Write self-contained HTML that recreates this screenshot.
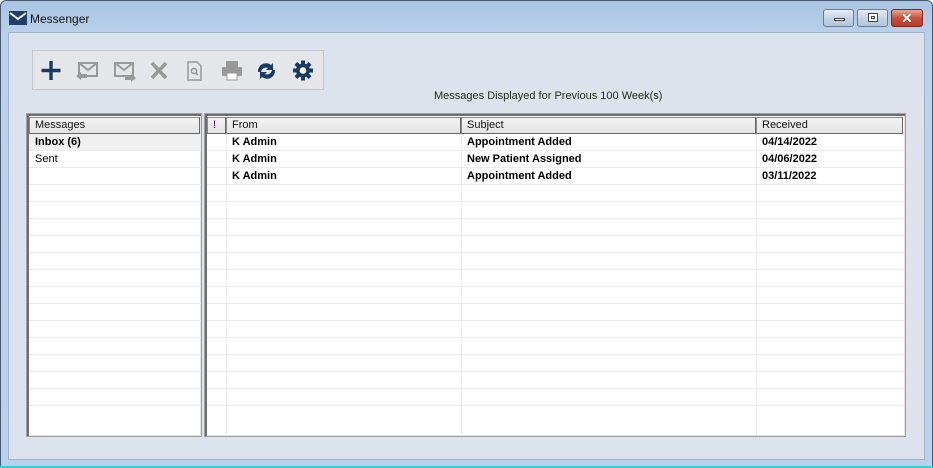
<!DOCTYPE html>
<html><head><meta charset="utf-8"><style>
*{margin:0;padding:0;box-sizing:border-box}
body{width:933px;height:468px;overflow:hidden;background:#fff;font-family:"Liberation Sans",sans-serif;font-size:11px;color:#000;position:relative}
.a{position:absolute}
.frame{left:0;top:0;width:933px;height:468px;background:linear-gradient(#a9c4e2,#bcd3ec 40px,#b9d1ea);border:1px solid #4a5a70;border-radius:6px 6px 0 0}
.client{left:8px;top:32px;width:917px;height:428px;background:#dce3ed;border:1px solid #9fb3cc}
.btn{top:9px;height:18px;border:1px solid #6b7d95;border-radius:3px;background:linear-gradient(#e6edf6,#c5d4e6 50%,#b2c5dc)}
.tb{left:32px;top:50px;width:292px;height:40px;background:#e4e6ea;border:1px solid #c4c7cc}
.panel{background:#fff;border:1px solid #a0a0a0;box-shadow:inset 2px 2px 0 #6e6e6e,inset -1px -1px 0 #e3e3e3}
.hdr{background:linear-gradient(#f4f4f4,#e4e4e4);border:1px solid #8a8a8a;border-right-color:#666;border-bottom-color:#666;height:17px;line-height:15px;padding-left:5px;font-size:11px;color:#111}
.row{height:17px;line-height:16px;border-bottom:1px solid #ececec;position:relative}
b{font-weight:bold}
</style></head><body>
<div class="a frame"></div>
<svg class="a" style="left:9px;top:11px" width="18" height="14"><rect x="0" y="0" width="18" height="14" fill="#1f3f6b"/><path d="M1 2 L9 8 L17 2" stroke="#fff" stroke-width="2" fill="none"/></svg>
<div class="a" style="left:30px;top:12px;font-size:12px;color:#111">Messenger</div>
<div class="a btn" style="left:823px;width:31px"><div class="a" style="left:10px;top:8px;width:11px;height:3px;background:#fff;border:1px solid #444"></div></div>
<div class="a btn" style="left:857px;width:31px"><div class="a" style="left:10px;top:3px;width:10px;height:9px;border:1px solid #444;background:#fff;box-shadow:inset 0 0 0 2px #fff,inset 0 0 0 3px #444"></div></div>
<div class="a btn" style="left:891px;width:32px;background:linear-gradient(#e8a89a,#c9503a 50%,#b83a25);border-color:#7a2a1a"><div class="a" style="left:9px;top:0px;color:#fff;font-weight:bold;font-size:14px;text-shadow:0 0 1px #333">✕</div></div>
<div class="a client"></div>
<div class="a tb"></div>
<svg class="a" style="left:32px;top:50px" width="292" height="40">
<path d="M19 11v19M9.5 20.5h19" stroke="#1a3a66" stroke-width="3.4"/>
<g fill="none" stroke="#999" stroke-width="2"><rect x="47" y="13" width="18" height="13"/><path d="M47 13l9 7 9-7"/></g><path d="M44 26l5-4v2h6v4h-6v2z" fill="#999"/>
<g fill="none" stroke="#999" stroke-width="2"><rect x="83" y="13" width="18" height="13"/><path d="M83 13l9 7 9-7"/></g><path d="M104 28l-5-4v2h-6v4h6v2z" fill="#999"/>
<path d="M120 13l14 15M134 13l-14 15" stroke="#999" stroke-width="3.5"/>
<path d="M156 12h9l4 4v14h-13z" fill="none" stroke="#aaa" stroke-width="2"/><circle cx="162" cy="21" r="2.6" fill="none" stroke="#999" stroke-width="1.6"/><path d="M164 23l2 2" stroke="#999" stroke-width="1.6"/>
<rect x="194" y="11" width="12" height="6" fill="#999"/><rect x="190" y="17" width="20" height="9" rx="1" fill="#999"/><rect x="195" y="23" width="10" height="7" fill="#fff" stroke="#999"/>
<path d="M226 22a8 8 0 0 1 13-7l2-2v7h-7l2-2a5 5 0 0 0-7 4z" fill="#1a3a66"/><path d="M243 20a8 8 0 0 1-13 7l-2 2v-7h7l-2 2a5 5 0 0 0 7-4z" fill="#1a3a66"/>
<g transform="translate(271 20.5)"><circle r="7" fill="#1a3a66"/><g fill="#1a3a66"><rect x="-2" y="-10" width="4" height="20"/><rect x="-2" y="-10" width="4" height="20" transform="rotate(45)"/><rect x="-2" y="-10" width="4" height="20" transform="rotate(90)"/><rect x="-2" y="-10" width="4" height="20" transform="rotate(135)"/></g><circle r="3.3" fill="#fff"/></g>
</svg>
<div class="a" style="left:434px;top:90px;font-size:11px;color:#1e2a14">Messages Displayed for Previous 100 Week(s)</div>

<div class="a panel" style="left:26px;top:113px;width:176px;height:324px;padding:3px 0 0 2px">
<div class="hdr" style="width:171px">Messages</div>
<div class="row" style="background:#f0f0f0;padding-left:6px"><b>Inbox (6)</b></div>
<div class="row" style="padding-left:6px">Sent</div>
<div class="row"></div><div class="row"></div><div class="row"></div><div class="row"></div><div class="row"></div><div class="row"></div><div class="row"></div><div class="row"></div><div class="row"></div><div class="row"></div><div class="row"></div><div class="row"></div><div class="row"></div><div class="row"></div>
</div>

<div class="a panel" style="left:204px;top:113px;width:702px;height:324px;padding:3px 0 0 2px;overflow:hidden">
<div style="display:flex">
<div class="hdr" style="width:19px;color:#80006a">!</div>
<div class="hdr" style="width:235px">From</div>
<div class="hdr" style="width:295px">Subject</div>
<div class="hdr" style="width:147px">Received</div>
</div>
<div class="a" style="left:21px;top:20px;width:1px;height:310px;background:#ececec"></div>
<div class="a" style="left:256px;top:20px;width:1px;height:310px;background:#ececec"></div>
<div class="a" style="left:551px;top:20px;width:1px;height:310px;background:#ececec"></div>
<div class="row"><b class="a" style="left:25px">K Admin</b><b class="a" style="left:260px">Appointment Added</b><b class="a" style="left:555px">04/14/2022</b></div>
<div class="row"><b class="a" style="left:25px">K Admin</b><b class="a" style="left:260px">New Patient Assigned</b><b class="a" style="left:555px">04/06/2022</b></div>
<div class="row"><b class="a" style="left:25px">K Admin</b><b class="a" style="left:260px">Appointment Added</b><b class="a" style="left:555px">03/11/2022</b></div>
<div class="row"></div><div class="row"></div><div class="row"></div><div class="row"></div><div class="row"></div><div class="row"></div><div class="row"></div><div class="row"></div><div class="row"></div><div class="row"></div><div class="row"></div><div class="row"></div><div class="row"></div>
</div>
<div class="a" style="left:0;top:466px;width:933px;height:2px;background:#3fc6e0"></div>
</body></html>
